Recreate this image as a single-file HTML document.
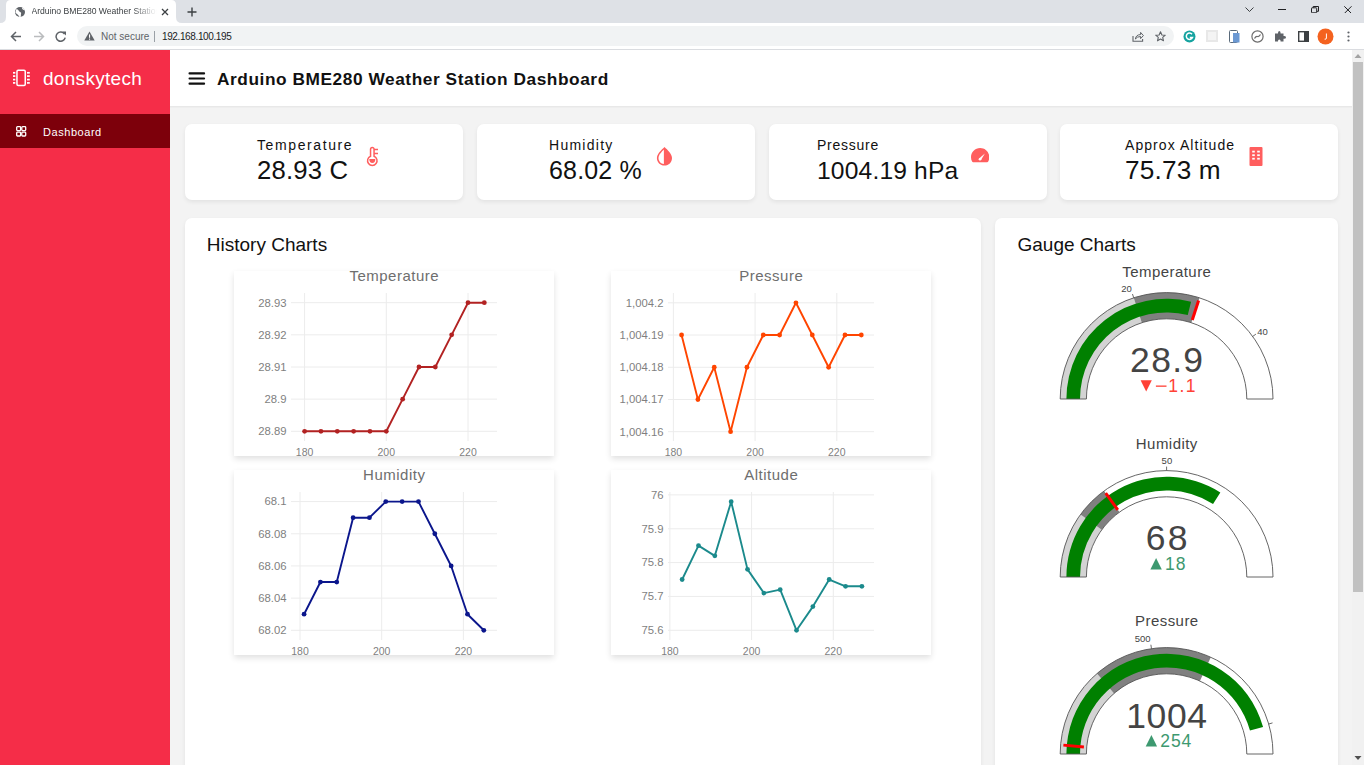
<!DOCTYPE html>
<html><head><meta charset="utf-8"><title>Arduino BME280 Weather Station Dashboard</title>
<style>
html,body{margin:0;padding:0;width:1364px;height:765px;overflow:hidden;background:#fff;font-family:'Liberation Sans', sans-serif;}
svg text{font-family:'Liberation Sans', sans-serif;}
</style></head><body>
<div style="position:absolute;left:0px;top:0px;width:1364px;height:23px;background:#dee1e6"></div><svg style="position:absolute;left:0px;top:0px;" width="190" height="23" viewBox="0 0 190 23"><path d="M0 23 Q6 23 6 17 L6 5 Q6 0 11 0 L171 0 Q176 0 176 5 L176 17 Q176 23 182 23 Z" fill="#fff"/></svg><svg style="position:absolute;left:14px;top:6px;" width="12" height="12" viewBox="0 0 12 12"><circle cx="6" cy="6" r="5" fill="#5f6368"/><path d="M2.2 3.2 Q4 3 4.6 4.6 Q5 6 6.6 6.2 Q7.6 6.6 7 8 Q6.4 9.6 7.4 10.6 L5.4 11 Q4.6 9.4 3.6 8.6 Q2.2 7.6 1.4 6.6 Z M8.2 1.6 Q7.6 2.8 8.8 3.4 Q10 3.6 10.8 4.6 L10.4 3 Z" fill="#fff"/></svg><div style="position:absolute;left:31.50px;top:7.22px;font-size:8.6px;line-height:8.6px;color:#3c4043;font-weight:400;letter-spacing:0px;white-space:nowrap;width:126px;overflow:hidden;-webkit-mask-image:linear-gradient(90deg,#000 80%,transparent 99%);">Arduino BME280 Weather Station</div><svg style="position:absolute;left:161px;top:8px;" width="8" height="8" viewBox="0 0 8 8"><path d="M1 1 L7 7 M7 1 L1 7" stroke="#3c4043" stroke-width="1.3"/></svg><svg style="position:absolute;left:187px;top:7px;" width="10" height="10" viewBox="0 0 10 10"><path d="M5 0.5 V9.5 M0.5 5 H9.5" stroke="#3c4043" stroke-width="1.4"/></svg><svg style="position:absolute;left:1245px;top:6px;" width="9" height="7" viewBox="0 0 9 7"><path d="M0.5 1.5 L4.5 5.5 L8.5 1.5" stroke="#3c4043" fill="none" stroke-width="1"/></svg><div style="position:absolute;left:1278px;top:9px;width:8px;height:1px;background:#202124"></div><svg style="position:absolute;left:1311px;top:6px;" width="8" height="7" viewBox="0 0 8 7"><rect x="0.5" y="1.8" width="5.2" height="5" rx="0.6" fill="none" stroke="#202124" stroke-width="1"/><path d="M2.2 1.8 V0.5 H7.5 V5.3 H5.7" fill="none" stroke="#202124" stroke-width="1"/></svg><svg style="position:absolute;left:1344px;top:6px;" width="8" height="7" viewBox="0 0 8 7"><path d="M0.3 0.3 L7.5 7.5 M7.5 0.3 L0.3 7.5" stroke="#202124" stroke-width="1"/></svg><div style="position:absolute;left:0px;top:23px;width:1364px;height:26px;background:#fff"></div><div style="position:absolute;left:0px;top:49px;width:1364px;height:1px;background:#dadce0"></div><svg style="position:absolute;left:10px;top:31px;" width="12" height="11" viewBox="0 0 12 11"><path d="M11 5.5 H1.8 M6 1 L1.5 5.5 L6 10" stroke="#5f6368" stroke-width="1.5" fill="none"/></svg><svg style="position:absolute;left:33px;top:31px;" width="12" height="11" viewBox="0 0 12 11"><path d="M1 5.5 H10.2 M6 1 L10.5 5.5 L6 10" stroke="#babcbe" stroke-width="1.5" fill="none"/></svg><svg style="position:absolute;left:55px;top:31px;" width="12" height="11" viewBox="0 0 12 11"><path d="M9.6 3.2 A4.6 4.6 0 1 0 10.2 6.6" stroke="#5f6368" stroke-width="1.5" fill="none"/><path d="M7.2 0.4 L11 0.4 L11 4.4 Z" fill="#5f6368"/></svg><div style="position:absolute;left:77px;top:26px;width:1097px;height:20px;background:#f1f3f4;border-radius:10px"></div><svg style="position:absolute;left:84px;top:31px;" width="11" height="10" viewBox="0 0 11 10"><path d="M5.5 0.5 L10.7 9.5 H0.3 Z" fill="#5f6368"/><rect x="5" y="3.4" width="1.1" height="3.4" fill="#fff"/><rect x="5" y="7.6" width="1.1" height="1.1" fill="#fff"/></svg><div style="position:absolute;left:101.00px;top:31.54px;font-size:10px;line-height:10px;color:#5f6368;font-weight:400;letter-spacing:0px;white-space:nowrap;">Not secure</div><div style="position:absolute;left:154px;top:31px;width:1px;height:11px;background:#9aa0a6"></div><div style="position:absolute;left:162.00px;top:31.54px;font-size:10px;line-height:10px;color:#202124;font-weight:400;letter-spacing:-0.38px;white-space:nowrap;">192.168.100.195</div><svg style="position:absolute;left:1132px;top:31px;" width="12" height="11" viewBox="0 0 12 11"><path d="M1 5 V10.3 H10.6 V8" stroke="#5f6368" stroke-width="1.1" fill="none"/><path d="M3.4 8 Q4 3.6 8.6 3.6 V1.4 L11.4 4.6 L8.6 7.6 V5.5 Q5 5.5 3.4 8 Z" stroke="#5f6368" stroke-width="1" fill="none"/></svg><svg style="position:absolute;left:1155px;top:31px;" width="11" height="11" viewBox="0 0 11 11"><path d="M5.5 0.8 L6.9 4 L10.3 4.2 L7.7 6.4 L8.5 9.8 L5.5 8 L2.5 9.8 L3.3 6.4 L0.7 4.2 L4.1 4 Z" stroke="#5f6368" stroke-width="1.1" fill="none" stroke-linejoin="round"/></svg><svg style="position:absolute;left:1183px;top:30px;" width="13" height="13" viewBox="0 0 13 13"><circle cx="6.5" cy="6.5" r="6" fill="#15a3a0"/><path d="M9 4.2 A3.2 3.2 0 1 0 9.4 7.6 H6.8" stroke="#fff" stroke-width="1.5" fill="none"/></svg><svg style="position:absolute;left:1206px;top:30px;" width="12" height="12" viewBox="0 0 12 12"><rect x="0" y="0" width="12" height="12" fill="#e8e8e8"/><rect x="2" y="2" width="8" height="8" fill="#f4f4f4"/></svg><svg style="position:absolute;left:1229px;top:30px;" width="11" height="13" viewBox="0 0 11 13"><rect x="0.5" y="0.5" width="8" height="12" rx="1" fill="#fff" stroke="#5a6a7a" stroke-width="1"/><rect x="4" y="3" width="6.5" height="9.5" fill="#6b98d2"/></svg><svg style="position:absolute;left:1251px;top:30px;" width="13" height="13" viewBox="0 0 13 13"><circle cx="6.5" cy="6.5" r="5.6" stroke="#6d6d6d" stroke-width="1.2" fill="none"/><path d="M3.5 8.5 Q5 6 6.5 6.5 Q8 7 9.5 4.5" stroke="#6d6d6d" stroke-width="1.3" fill="none"/></svg><svg style="position:absolute;left:1274px;top:30px;" width="12" height="12" viewBox="0 0 12 12"><path d="M1 3.5 H4 Q3.8 1 5.3 1 Q6.8 1 6.6 3.5 H9.5 V6 Q12 5.8 12 7.4 Q12 9 9.5 8.8 V11.5 H6.6 Q6.8 9.5 5.3 9.5 Q3.8 9.5 4 11.5 H1 Z" fill="#5f6368"/></svg><svg style="position:absolute;left:1298px;top:31px;" width="11" height="11" viewBox="0 0 11 11"><rect x="0.7" y="0.7" width="9.6" height="9.6" fill="none" stroke="#3c4043" stroke-width="1.4"/><rect x="6" y="0.7" width="4.3" height="9.6" fill="#3c4043"/></svg><svg style="position:absolute;left:1317px;top:28px;" width="17" height="17" viewBox="0 0 17 17"><circle cx="8.5" cy="8.5" r="8" fill="#f4621f"/><path d="M9.4 5.5 V10 Q9.4 11.6 7.6 11.2" stroke="#fff" stroke-width="1" fill="none"/></svg><svg style="position:absolute;left:1346px;top:31px;" width="5" height="11" viewBox="0 0 5 11"><circle cx="2.5" cy="1.5" r="1.1" fill="#5f6368"/><circle cx="2.5" cy="5.5" r="1.1" fill="#5f6368"/><circle cx="2.5" cy="9.5" r="1.1" fill="#5f6368"/></svg><div style="position:absolute;left:0px;top:50px;width:1364px;height:715px;background:#f3f3f3"></div><div style="position:absolute;left:0px;top:50px;width:170px;height:715px;background:#f52d48"></div><div style="position:absolute;left:0px;top:114px;width:170px;height:34px;background:#7d000b"></div><svg style="position:absolute;left:13px;top:69px;" width="18" height="18" viewBox="0 0 18 18"><rect x="3.95" y="1.25" width="8.3" height="15.3" rx="1.2" fill="none" stroke="#fff" stroke-width="1.5"/><rect x="0" y="2.95" width="2.3" height="1.7" fill="#fff"/><rect x="14" y="2.95" width="2.8" height="1.7" fill="#fff"/><rect x="0" y="6.25" width="2.3" height="1.7" fill="#fff"/><rect x="14" y="6.25" width="2.8" height="1.7" fill="#fff"/><rect x="0" y="9.75" width="2.3" height="1.7" fill="#fff"/><rect x="14" y="9.75" width="2.8" height="1.7" fill="#fff"/><rect x="0" y="13.05" width="2.3" height="1.7" fill="#fff"/><rect x="14" y="13.05" width="2.8" height="1.7" fill="#fff"/></svg><div style="position:absolute;left:43.00px;top:68.62px;font-size:19px;line-height:19px;color:#fff;font-weight:400;letter-spacing:0.3px;white-space:nowrap;">donskytech</div><svg style="position:absolute;left:16px;top:126px;" width="11" height="11" viewBox="0 0 11 11"><rect x="0.7" y="0.7" width="3.9" height="3.9" rx="0.8" fill="none" stroke="#fff" stroke-width="1.3"/><rect x="0.7" y="6.1" width="3.9" height="3.9" rx="0.8" fill="none" stroke="#fff" stroke-width="1.3"/><rect x="5.8" y="0.7" width="3.9" height="3.9" rx="0.8" fill="none" stroke="#fff" stroke-width="1.3"/><rect x="5.8" y="6.1" width="3.9" height="3.9" rx="0.8" fill="none" stroke="#fff" stroke-width="1.3"/></svg><div style="position:absolute;left:43.00px;top:126.69px;font-size:11px;line-height:11px;color:#fff;font-weight:400;letter-spacing:0.55px;white-space:nowrap;">Dashboard</div><div style="position:absolute;left:170px;top:50px;width:1182px;height:56px;background:#fff"></div><div style="position:absolute;left:170px;top:106px;width:1182px;height:1px;background:#e8e8e8"></div><div style="position:absolute;left:170px;top:107px;width:1182px;height:1px;background:#eeeeee"></div><svg style="position:absolute;left:188px;top:71px;" width="18" height="15" viewBox="0 0 18 15"><rect x="0.5" y="1.2" width="16.6" height="2.2" rx="1" fill="#111"/><rect x="0.5" y="6.4" width="16.6" height="2.2" rx="1" fill="#111"/><rect x="0.5" y="11.6" width="16.6" height="2.2" rx="1" fill="#111"/></svg><div style="position:absolute;left:217.00px;top:70.56px;font-size:17.3px;line-height:17.3px;color:#111;font-weight:700;letter-spacing:0.56px;white-space:nowrap;">Arduino BME280 Weather Station Dashboard</div><div style="position:absolute;left:185px;top:124px;width:277.5px;height:76px;background:#fff;border-radius:7px;box-shadow:0 2px 4px rgba(0,0,0,0.07)"></div><div style="position:absolute;left:477px;top:124px;width:277.5px;height:76px;background:#fff;border-radius:7px;box-shadow:0 2px 4px rgba(0,0,0,0.07)"></div><div style="position:absolute;left:769px;top:124px;width:277.5px;height:76px;background:#fff;border-radius:7px;box-shadow:0 2px 4px rgba(0,0,0,0.07)"></div><div style="position:absolute;left:1060px;top:124px;width:278px;height:76px;background:#fff;border-radius:7px;box-shadow:0 2px 4px rgba(0,0,0,0.07)"></div><div style="position:absolute;left:257.00px;top:137.85px;font-size:14px;line-height:14px;color:#111;font-weight:400;letter-spacing:1.6px;white-space:nowrap;">Temperature</div><div style="position:absolute;left:257.00px;top:157.84px;font-size:25.7px;line-height:25.7px;color:#111;font-weight:400;letter-spacing:0.17px;white-space:nowrap;">28.93 C</div><div style="position:absolute;left:549.00px;top:137.85px;font-size:14px;line-height:14px;color:#111;font-weight:400;letter-spacing:1.27px;white-space:nowrap;">Humidity</div><div style="position:absolute;left:549.00px;top:158.44px;font-size:25px;line-height:25px;color:#111;font-weight:400;letter-spacing:0.17px;white-space:nowrap;">68.02 %</div><div style="position:absolute;left:817.00px;top:137.85px;font-size:14px;line-height:14px;color:#111;font-weight:400;letter-spacing:0.75px;white-space:nowrap;">Pressure</div><div style="position:absolute;left:817.00px;top:158.78px;font-size:24.6px;line-height:24.6px;color:#111;font-weight:400;letter-spacing:0.17px;white-space:nowrap;">1004.19 hPa</div><div style="position:absolute;left:1125.00px;top:137.85px;font-size:14px;line-height:14px;color:#111;font-weight:400;letter-spacing:1.06px;white-space:nowrap;">Approx Altitude</div><div style="position:absolute;left:1125.00px;top:157.42px;font-size:26.2px;line-height:26.2px;color:#111;font-weight:400;letter-spacing:0.17px;white-space:nowrap;">75.73 m</div><svg style="position:absolute;left:366px;top:146px;" width="14" height="21" viewBox="0 0 14 21"><path d="M4.55 10.28 V3.3 A1.75 1.75 0 0 1 8.05 3.3 V10.28 A4.75 4.75 0 1 1 4.55 10.28 Z" fill="none" stroke="#ff5e5e" stroke-width="1.5"/><path d="M8.05 3.5 H12 M8.05 7.4 H12" stroke="#ff5e5e" stroke-width="1.5"/><path d="M3.3 13 H9.3 A3 3.9 0 0 1 3.3 13 Z" fill="#ff5e5e"/></svg><svg style="position:absolute;left:656px;top:146px;" width="17" height="21" viewBox="0 0 17 21"><path d="M8.5 1.1 C5.5 4 0.9 8 0.9 12 C0.9 16.3 4.3 19.6 8.5 19.6 C12.7 19.6 16 16.3 16 12 C16 8 11.5 4 8.5 1.1 Z" fill="#ff5e5e"/><path d="M7.9 3.6 C5.6 5.9 2.5 9 2.5 12 C2.5 15.3 4.9 17.8 7.9 18 Z" fill="#fff"/></svg><svg style="position:absolute;left:970.8px;top:148.3px;" width="18.3" height="14.3" viewBox="0 0 18.3 14.3"><g transform="scale(0.03177) translate(0,-32)"><path d="M288 32C128.94 32 0 160.94 0 320c0 52.8 14.25 102.26 39.06 144.8 5.61 9.62 16.3 15.2 27.44 15.2h443c11.14 0 21.830-5.58 27.44-15.2C561.75 422.26 576 372.8 576 320c0-159.06-128.940-288-288-288z" fill="#ff5e5e"/></g><path d="M9.95 12.1 L8.05 10.5 L13.9 5.5 Z" fill="#fff"/><circle cx="9" cy="11.3" r="1.3" fill="#fff"/></svg><svg style="position:absolute;left:1249px;top:147px;" width="14" height="19" viewBox="0 0 14 19"><rect x="0.5" y="0" width="13" height="19" rx="1" fill="#ff5e5e"/><rect x="3.2" y="3.7" width="2.6" height="1.8" fill="#fff"/><rect x="3.2" y="7.3" width="2.6" height="1.8" fill="#fff"/><rect x="3.2" y="10.8" width="2.6" height="1.8" fill="#fff"/><rect x="8.2" y="3.7" width="2.6" height="1.8" fill="#fff"/><rect x="8.2" y="7.3" width="2.6" height="1.8" fill="#fff"/><rect x="8.2" y="10.8" width="2.6" height="1.8" fill="#fff"/></svg><div style="position:absolute;left:185px;top:218px;width:796px;height:600px;background:#fff;border-radius:7px;box-shadow:0 2px 4px rgba(0,0,0,0.07)"></div><div style="position:absolute;left:995px;top:218px;width:343px;height:600px;background:#fff;border-radius:7px;box-shadow:0 2px 4px rgba(0,0,0,0.07)"></div><div style="position:absolute;left:206.80px;top:234.82px;font-size:19px;line-height:19px;color:#111;font-weight:400;letter-spacing:0px;white-space:nowrap;">History Charts</div><div style="position:absolute;left:1017.50px;top:234.52px;font-size:19px;line-height:19px;color:#111;font-weight:400;letter-spacing:0px;white-space:nowrap;">Gauge Charts</div><svg style="position:absolute;left:234px;top:271px;font-family:'Liberation Sans', sans-serif;overflow:visible;box-shadow:0 3px 6px rgba(0,0,0,0.12)" width="320" height="185" viewBox="0 0 320 185"><rect x="0" y="0" width="320" height="185" fill="#fff"/><line x1="70.60" y1="22" x2="70.60" y2="170" stroke="#ececec" stroke-width="1"/><text x="70.60" y="185" font-size="10.5" fill="#7f7f7f" text-anchor="middle">180</text><line x1="152.30" y1="22" x2="152.30" y2="170" stroke="#ececec" stroke-width="1"/><text x="152.30" y="185" font-size="10.5" fill="#7f7f7f" text-anchor="middle">200</text><line x1="234.00" y1="22" x2="234.00" y2="170" stroke="#ececec" stroke-width="1"/><text x="234.00" y="185" font-size="10.5" fill="#7f7f7f" text-anchor="middle">220</text><line x1="57" y1="31.70" x2="263" y2="31.70" stroke="#ececec" stroke-width="1"/><text x="52.5" y="35.50" font-size="11.3" fill="#7f7f7f" text-anchor="end">28.93</text><line x1="57" y1="63.85" x2="263" y2="63.85" stroke="#ececec" stroke-width="1"/><text x="52.5" y="67.65" font-size="11.3" fill="#7f7f7f" text-anchor="end">28.92</text><line x1="57" y1="96.00" x2="263" y2="96.00" stroke="#ececec" stroke-width="1"/><text x="52.5" y="99.80" font-size="11.3" fill="#7f7f7f" text-anchor="end">28.91</text><line x1="57" y1="128.15" x2="263" y2="128.15" stroke="#ececec" stroke-width="1"/><text x="52.5" y="131.95" font-size="11.3" fill="#7f7f7f" text-anchor="end">28.9</text><line x1="57" y1="160.30" x2="263" y2="160.30" stroke="#ececec" stroke-width="1"/><text x="52.5" y="164.10" font-size="11.3" fill="#7f7f7f" text-anchor="end">28.89</text><polyline points="70.60,160.30 86.94,160.30 103.28,160.30 119.62,160.30 135.96,160.30 152.30,160.30 168.64,128.15 184.98,96.00 201.32,96.00 217.66,63.85 234.00,31.70 250.34,31.70" fill="none" stroke="#b22222" stroke-width="1.9" stroke-linejoin="round"/><circle cx="70.60" cy="160.30" r="2.4" fill="#b22222"/><circle cx="86.94" cy="160.30" r="2.4" fill="#b22222"/><circle cx="103.28" cy="160.30" r="2.4" fill="#b22222"/><circle cx="119.62" cy="160.30" r="2.4" fill="#b22222"/><circle cx="135.96" cy="160.30" r="2.4" fill="#b22222"/><circle cx="152.30" cy="160.30" r="2.4" fill="#b22222"/><circle cx="168.64" cy="128.15" r="2.4" fill="#b22222"/><circle cx="184.98" cy="96.00" r="2.4" fill="#b22222"/><circle cx="201.32" cy="96.00" r="2.4" fill="#b22222"/><circle cx="217.66" cy="63.85" r="2.4" fill="#b22222"/><circle cx="234.00" cy="31.70" r="2.4" fill="#b22222"/><circle cx="250.34" cy="31.70" r="2.4" fill="#b22222"/><text x="160.25" y="10.2" font-size="15" letter-spacing="0.5" fill="#6e6e6e" text-anchor="middle">Temperature</text></svg><svg style="position:absolute;left:611px;top:271px;font-family:'Liberation Sans', sans-serif;overflow:visible;box-shadow:0 3px 6px rgba(0,0,0,0.12)" width="320" height="185" viewBox="0 0 320 185"><rect x="0" y="0" width="320" height="185" fill="#fff"/><line x1="62.40" y1="22" x2="62.40" y2="170" stroke="#ececec" stroke-width="1"/><text x="62.40" y="185" font-size="10.5" fill="#7f7f7f" text-anchor="middle">180</text><line x1="144.10" y1="22" x2="144.10" y2="170" stroke="#ececec" stroke-width="1"/><text x="144.10" y="185" font-size="10.5" fill="#7f7f7f" text-anchor="middle">200</text><line x1="225.80" y1="22" x2="225.80" y2="170" stroke="#ececec" stroke-width="1"/><text x="225.80" y="185" font-size="10.5" fill="#7f7f7f" text-anchor="middle">220</text><line x1="57" y1="31.80" x2="263" y2="31.80" stroke="#ececec" stroke-width="1"/><text x="52.5" y="35.60" font-size="11.3" fill="#7f7f7f" text-anchor="end">1,004.2</text><line x1="57" y1="64.02" x2="263" y2="64.02" stroke="#ececec" stroke-width="1"/><text x="52.5" y="67.82" font-size="11.3" fill="#7f7f7f" text-anchor="end">1,004.19</text><line x1="57" y1="96.25" x2="263" y2="96.25" stroke="#ececec" stroke-width="1"/><text x="52.5" y="100.05" font-size="11.3" fill="#7f7f7f" text-anchor="end">1,004.18</text><line x1="57" y1="128.48" x2="263" y2="128.48" stroke="#ececec" stroke-width="1"/><text x="52.5" y="132.28" font-size="11.3" fill="#7f7f7f" text-anchor="end">1,004.17</text><line x1="57" y1="160.70" x2="263" y2="160.70" stroke="#ececec" stroke-width="1"/><text x="52.5" y="164.50" font-size="11.3" fill="#7f7f7f" text-anchor="end">1,004.16</text><polyline points="70.57,64.02 86.91,128.48 103.25,96.25 119.59,160.70 135.93,96.25 152.27,64.02 168.61,64.02 184.95,31.80 201.29,64.02 217.63,96.25 233.97,64.02 250.31,64.02" fill="none" stroke="#ff4500" stroke-width="1.9" stroke-linejoin="round"/><circle cx="70.57" cy="64.02" r="2.4" fill="#ff4500"/><circle cx="86.91" cy="128.48" r="2.4" fill="#ff4500"/><circle cx="103.25" cy="96.25" r="2.4" fill="#ff4500"/><circle cx="119.59" cy="160.70" r="2.4" fill="#ff4500"/><circle cx="135.93" cy="96.25" r="2.4" fill="#ff4500"/><circle cx="152.27" cy="64.02" r="2.4" fill="#ff4500"/><circle cx="168.61" cy="64.02" r="2.4" fill="#ff4500"/><circle cx="184.95" cy="31.80" r="2.4" fill="#ff4500"/><circle cx="201.29" cy="64.02" r="2.4" fill="#ff4500"/><circle cx="217.63" cy="96.25" r="2.4" fill="#ff4500"/><circle cx="233.97" cy="64.02" r="2.4" fill="#ff4500"/><circle cx="250.31" cy="64.02" r="2.4" fill="#ff4500"/><text x="160.25" y="10.2" font-size="15" letter-spacing="0.5" fill="#6e6e6e" text-anchor="middle">Pressure</text></svg><svg style="position:absolute;left:234px;top:470px;font-family:'Liberation Sans', sans-serif;overflow:visible;box-shadow:0 3px 6px rgba(0,0,0,0.12)" width="320" height="185" viewBox="0 0 320 185"><rect x="0" y="0" width="320" height="185" fill="#fff"/><line x1="66.00" y1="22" x2="66.00" y2="170" stroke="#ececec" stroke-width="1"/><text x="66.00" y="185" font-size="10.5" fill="#7f7f7f" text-anchor="middle">180</text><line x1="147.70" y1="22" x2="147.70" y2="170" stroke="#ececec" stroke-width="1"/><text x="147.70" y="185" font-size="10.5" fill="#7f7f7f" text-anchor="middle">200</text><line x1="229.40" y1="22" x2="229.40" y2="170" stroke="#ececec" stroke-width="1"/><text x="229.40" y="185" font-size="10.5" fill="#7f7f7f" text-anchor="middle">220</text><line x1="57" y1="31.60" x2="263" y2="31.60" stroke="#ececec" stroke-width="1"/><text x="52.5" y="35.40" font-size="11.3" fill="#7f7f7f" text-anchor="end">68.1</text><line x1="57" y1="63.77" x2="263" y2="63.77" stroke="#ececec" stroke-width="1"/><text x="52.5" y="67.57" font-size="11.3" fill="#7f7f7f" text-anchor="end">68.08</text><line x1="57" y1="95.95" x2="263" y2="95.95" stroke="#ececec" stroke-width="1"/><text x="52.5" y="99.75" font-size="11.3" fill="#7f7f7f" text-anchor="end">68.06</text><line x1="57" y1="128.12" x2="263" y2="128.12" stroke="#ececec" stroke-width="1"/><text x="52.5" y="131.92" font-size="11.3" fill="#7f7f7f" text-anchor="end">68.04</text><line x1="57" y1="160.30" x2="263" y2="160.30" stroke="#ececec" stroke-width="1"/><text x="52.5" y="164.10" font-size="11.3" fill="#7f7f7f" text-anchor="end">68.02</text><polyline points="70.08,144.21 86.42,112.04 102.77,112.04 119.10,47.69 135.44,47.69 151.78,31.60 168.12,31.60 184.47,31.60 200.81,63.77 217.15,95.95 233.48,144.21 249.82,160.30" fill="none" stroke="#0b168c" stroke-width="1.9" stroke-linejoin="round"/><circle cx="70.08" cy="144.21" r="2.4" fill="#0b168c"/><circle cx="86.42" cy="112.04" r="2.4" fill="#0b168c"/><circle cx="102.77" cy="112.04" r="2.4" fill="#0b168c"/><circle cx="119.10" cy="47.69" r="2.4" fill="#0b168c"/><circle cx="135.44" cy="47.69" r="2.4" fill="#0b168c"/><circle cx="151.78" cy="31.60" r="2.4" fill="#0b168c"/><circle cx="168.12" cy="31.60" r="2.4" fill="#0b168c"/><circle cx="184.47" cy="31.60" r="2.4" fill="#0b168c"/><circle cx="200.81" cy="63.77" r="2.4" fill="#0b168c"/><circle cx="217.15" cy="95.95" r="2.4" fill="#0b168c"/><circle cx="233.48" cy="144.21" r="2.4" fill="#0b168c"/><circle cx="249.82" cy="160.30" r="2.4" fill="#0b168c"/><text x="160.25" y="10.2" font-size="15" letter-spacing="0.5" fill="#6e6e6e" text-anchor="middle">Humidity</text></svg><svg style="position:absolute;left:611px;top:470px;font-family:'Liberation Sans', sans-serif;overflow:visible;box-shadow:0 3px 6px rgba(0,0,0,0.12)" width="320" height="185" viewBox="0 0 320 185"><rect x="0" y="0" width="320" height="185" fill="#fff"/><line x1="58.90" y1="22" x2="58.90" y2="170" stroke="#ececec" stroke-width="1"/><text x="58.90" y="185" font-size="10.5" fill="#7f7f7f" text-anchor="middle">180</text><line x1="140.60" y1="22" x2="140.60" y2="170" stroke="#ececec" stroke-width="1"/><text x="140.60" y="185" font-size="10.5" fill="#7f7f7f" text-anchor="middle">200</text><line x1="222.30" y1="22" x2="222.30" y2="170" stroke="#ececec" stroke-width="1"/><text x="222.30" y="185" font-size="10.5" fill="#7f7f7f" text-anchor="middle">220</text><line x1="57" y1="24.90" x2="263" y2="24.90" stroke="#ececec" stroke-width="1"/><text x="52.5" y="28.70" font-size="11.3" fill="#7f7f7f" text-anchor="end">76</text><line x1="57" y1="58.75" x2="263" y2="58.75" stroke="#ececec" stroke-width="1"/><text x="52.5" y="62.55" font-size="11.3" fill="#7f7f7f" text-anchor="end">75.9</text><line x1="57" y1="92.60" x2="263" y2="92.60" stroke="#ececec" stroke-width="1"/><text x="52.5" y="96.40" font-size="11.3" fill="#7f7f7f" text-anchor="end">75.8</text><line x1="57" y1="126.45" x2="263" y2="126.45" stroke="#ececec" stroke-width="1"/><text x="52.5" y="130.25" font-size="11.3" fill="#7f7f7f" text-anchor="end">75.7</text><line x1="57" y1="160.30" x2="263" y2="160.30" stroke="#ececec" stroke-width="1"/><text x="52.5" y="164.10" font-size="11.3" fill="#7f7f7f" text-anchor="end">75.6</text><polyline points="71.15,109.52 87.49,75.68 103.83,85.83 120.17,31.67 136.51,99.37 152.85,123.07 169.19,119.68 185.53,160.30 201.87,136.60 218.21,109.52 234.55,116.29 250.89,116.29" fill="none" stroke="#1b8a8c" stroke-width="1.9" stroke-linejoin="round"/><circle cx="71.15" cy="109.52" r="2.4" fill="#1b8a8c"/><circle cx="87.49" cy="75.68" r="2.4" fill="#1b8a8c"/><circle cx="103.83" cy="85.83" r="2.4" fill="#1b8a8c"/><circle cx="120.17" cy="31.67" r="2.4" fill="#1b8a8c"/><circle cx="136.51" cy="99.37" r="2.4" fill="#1b8a8c"/><circle cx="152.85" cy="123.07" r="2.4" fill="#1b8a8c"/><circle cx="169.19" cy="119.68" r="2.4" fill="#1b8a8c"/><circle cx="185.53" cy="160.30" r="2.4" fill="#1b8a8c"/><circle cx="201.87" cy="136.60" r="2.4" fill="#1b8a8c"/><circle cx="218.21" cy="109.52" r="2.4" fill="#1b8a8c"/><circle cx="234.55" cy="116.29" r="2.4" fill="#1b8a8c"/><circle cx="250.89" cy="116.29" r="2.4" fill="#1b8a8c"/><text x="160.25" y="10.2" font-size="15" letter-spacing="0.5" fill="#6e6e6e" text-anchor="middle">Altitude</text></svg><svg style="position:absolute;left:1040px;top:239px;font-family:'Liberation Sans', sans-serif;overflow:visible" width="260" height="170" viewBox="0 0 260 170"><text x="126.81999999999991" y="38.20" font-size="15" letter-spacing="0.45" fill="#444" text-anchor="middle">Temperature</text><path d="M20.20 160.00 A106.4 106.4 0 0 1 233.00 160.00 L206.80 160.00 A80.2 80.2 0 0 0 46.40 160.00 Z" fill="#fff"/><path d="M20.20 160.00 A106.4 106.4 0 0 1 93.72 58.81 L101.82 83.73 A80.2 80.2 0 0 0 46.40 160.00 Z" fill="#d3d3d3"/><path d="M93.72 58.81 A106.4 106.4 0 0 1 159.48 58.81 L151.38 83.73 A80.2 80.2 0 0 0 101.82 83.73 Z" fill="#808080"/><path d="M26.40 160.00 A100.2 100.2 0 0 1 151.09 62.84 L147.77 76.03 A86.6 86.6 0 0 0 40.00 160.00 Z" fill="#008000"/><path d="M20.20 160.00 A106.4 106.4 0 0 1 233.00 160.00 L206.80 160.00 A80.2 80.2 0 0 0 46.40 160.00 Z" fill="none" stroke="#555" stroke-width="0.9"/><line x1="152.25" y1="81.06" x2="158.61" y2="61.47" stroke="#f00" stroke-width="3"/><line x1="93.72" y1="58.81" x2="92.48" y2="55.00" stroke="#444" stroke-width="0.8"/><text x="81.30" y="53.30" font-size="9.5" fill="#444">20</text><line x1="212.68" y1="97.46" x2="215.92" y2="95.11" stroke="#444" stroke-width="0.8"/><text x="217.30" y="96.20" font-size="9.5" fill="#444">40</text><text x="127.25" y="133.40" font-size="35.5" letter-spacing="1.3" fill="#444" text-anchor="middle">28.9</text><path d="M100.60 141.20 H111.80 L106.20 152.60 Z" fill="#ff4136"/><rect x="115.90" y="146.50" width="10.6" height="1.3" fill="#ff4136"/><text x="128.30" y="152.60" font-size="17.5" letter-spacing="1.4" fill="#ff4136">1.1</text></svg><svg style="position:absolute;left:1040px;top:416.70000000000005px;font-family:'Liberation Sans', sans-serif;overflow:visible" width="260" height="170" viewBox="0 0 260 170"><text x="126.81999999999991" y="31.80" font-size="15" letter-spacing="0.45" fill="#444" text-anchor="middle">Humidity</text><path d="M20.20 160.00 A106.4 106.4 0 0 1 233.00 160.00 L206.80 160.00 A80.2 80.2 0 0 0 46.40 160.00 Z" fill="#fff"/><path d="M20.20 160.00 A106.4 106.4 0 0 1 40.52 97.46 L61.72 112.86 A80.2 80.2 0 0 0 46.40 160.00 Z" fill="#d3d3d3"/><path d="M40.52 97.46 A106.4 106.4 0 0 1 64.06 73.92 L79.46 95.12 A80.2 80.2 0 0 0 61.72 112.86 Z" fill="#808080"/><path d="M26.40 160.00 A100.2 100.2 0 0 1 180.34 75.43 L173.05 86.91 A86.6 86.6 0 0 0 40.00 160.00 Z" fill="#008000"/><path d="M20.20 160.00 A106.4 106.4 0 0 1 233.00 160.00 L206.80 160.00 A80.2 80.2 0 0 0 46.40 160.00 Z" fill="none" stroke="#555" stroke-width="0.9"/><line x1="77.81" y1="92.85" x2="65.71" y2="76.19" stroke="#f00" stroke-width="3"/><line x1="126.60" y1="53.60" x2="126.60" y2="49.60" stroke="#444" stroke-width="0.8"/><text x="121.60" y="46.60" font-size="9.5" fill="#444">50</text><text x="127.70" y="133.40" font-size="35.5" letter-spacing="2.2" fill="#444" text-anchor="middle">68</text><path d="M110.40 152.60 H121.80 L116.10 141.00 Z" fill="#3d9970"/><text x="125.00" y="152.60" font-size="17.5" letter-spacing="0.9" fill="#3d9970">18</text></svg><svg style="position:absolute;left:1040px;top:594.4px;font-family:'Liberation Sans', sans-serif;overflow:visible" width="260" height="170" viewBox="0 0 260 170"><text x="126.81999999999991" y="32.20" font-size="15" letter-spacing="0.45" fill="#444" text-anchor="middle">Pressure</text><path d="M20.20 160.00 A106.4 106.4 0 0 1 233.00 160.00 L206.80 160.00 A80.2 80.2 0 0 0 46.40 160.00 Z" fill="#fff"/><path d="M20.20 160.00 A106.4 106.4 0 0 1 56.92 79.59 L74.08 99.39 A80.2 80.2 0 0 0 46.40 160.00 Z" fill="#d3d3d3"/><path d="M56.92 79.59 A106.4 106.4 0 0 1 170.80 63.22 L159.92 87.05 A80.2 80.2 0 0 0 74.08 99.39 Z" fill="#808080"/><path d="M26.40 160.00 A100.2 100.2 0 0 1 223.07 132.92 L209.98 136.60 A86.6 86.6 0 0 0 40.00 160.00 Z" fill="#008000"/><path d="M20.20 160.00 A106.4 106.4 0 0 1 233.00 160.00 L206.80 160.00 A80.2 80.2 0 0 0 46.40 160.00 Z" fill="none" stroke="#555" stroke-width="0.9"/><line x1="43.90" y1="152.90" x2="23.38" y2="151.13" stroke="#f00" stroke-width="3"/><line x1="111.46" y1="54.68" x2="110.89" y2="50.72" stroke="#444" stroke-width="0.8"/><text x="94.80" y="47.90" font-size="9.5" fill="#444">500</text><line x1="228.69" y1="130.02" x2="232.53" y2="128.90" stroke="#444" stroke-width="0.8"/><text x="126.90" y="134.40" font-size="35.5" letter-spacing="0.6" fill="#444" text-anchor="middle">1004</text><path d="M105.70 152.60 H117.10 L111.40 141.00 Z" fill="#3d9970"/><text x="120.30" y="152.60" font-size="17.5" letter-spacing="0.9" fill="#3d9970">254</text></svg><div style="position:absolute;left:1352px;top:50px;width:12px;height:715px;background:#f1f1f1"></div><div style="position:absolute;left:1353px;top:62px;width:10px;height:530px;background:#c1c1c1"></div><svg style="position:absolute;left:1354px;top:53px;" width="8" height="6" viewBox="0 0 8 6"><path d="M4 1 L7.5 5 H0.5 Z" fill="#a3a3a3"/></svg><svg style="position:absolute;left:1354px;top:755px;" width="8" height="6" viewBox="0 0 8 6"><path d="M4 5 L7.5 1 H0.5 Z" fill="#505050"/></svg>
</body></html>
